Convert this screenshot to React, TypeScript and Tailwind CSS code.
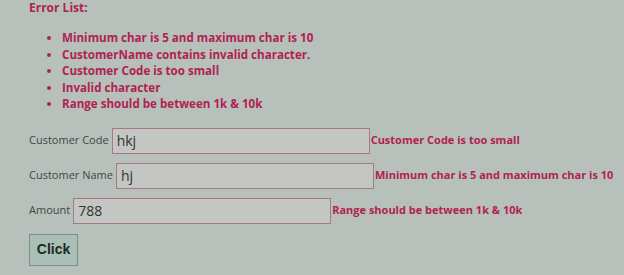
import React from "react";

const errors = [
  "Minimum char is 5 and maximum char is 10",
  "CustomerName contains invalid character.",
  "Customer Code is too small",
  "Invalid character",
  "Range should be between 1k & 10k",
];

function Row({ label, value, error }: { label: string; value: string; error: string }) {
  return (
    <div className="flex items-center h-[26px]">
      <label className="text-[11px] text-[#3d4a45] mr-[3px]">{label}</label>
      <input
        readOnly
        value={value}
        className="w-[258px] h-[26px] bg-[#c3c6c2] border border-[#a57a86] px-[4px] text-[14px] text-[#2d3632] outline-none"
        style={{ fontFamily: '"Open Sans", sans-serif' }}
      />
      <span className="ml-[1px] text-[11px] font-bold text-[#b0234f]">{error}</span>
    </div>
  );
}

export default function App() {
  return (
    <div
      className="w-[624px] h-[275px] bg-[#b7c0bb] pl-[29px] pt-0 overflow-hidden"
      style={{ fontFamily: '"Open Sans", "Noto Sans", sans-serif' }}
    >
      <div className="text-[12px] font-bold text-[#b0234f] leading-[16px]">Error List:</div>
      <ul className="list-disc pl-[33px] mt-[14px] text-[11.6px] font-bold text-[#b0234f] leading-[16.5px] marker:text-[#b0234f]">
        {errors.map((e) => (
          <li key={e}>{e}</li>
        ))}
      </ul>
      <div className="mt-[15px] flex flex-col gap-[9px]">
        <Row label="Customer Code" value="hkj" error="Customer Code is too small" />
        <Row label="Customer Name" value="hj" error="Minimum char is 5 and maximum char is 10" />
        <Row label="Amount" value="788" error="Range should be between 1k & 10k" />
      </div>
      <button
        className="mt-[10px] w-[49px] h-[32px] bg-[#a9c0b6] border border-[#7f8c87] text-[14px] font-bold text-[#1d2a25]"
        style={{ fontFamily: '"Liberation Sans", Arial, sans-serif' }}
      >
        Click
      </button>
    </div>
  );
}
